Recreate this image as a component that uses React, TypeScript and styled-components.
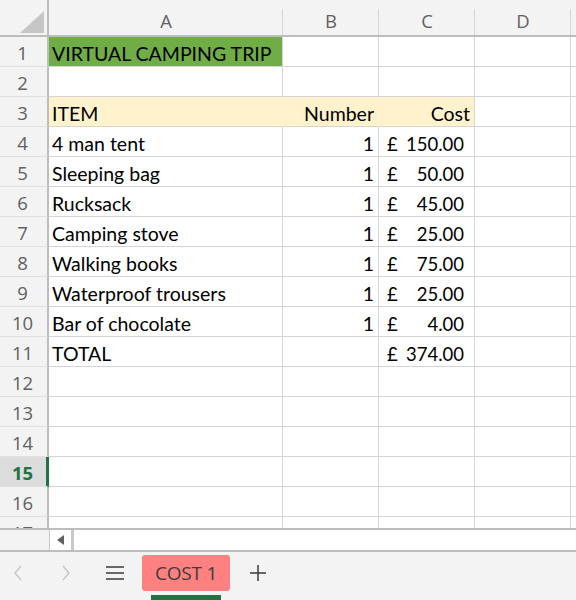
import React from 'react'
import styled, { createGlobalStyle, css } from 'styled-components'

const GlobalStyle = createGlobalStyle`
  html, body {
    margin: 0;
    padding: 0;
    background: #ffffff;
  }
  body {
    font-family: 'Open Sans', 'Noto Sans', sans-serif;
  }
`

const GRID_LINE = '#d4d4d4'
const HEADER_BG = '#f3f3f3'
const FRAME = '#bdbdbd'

type Fill = 'green' | 'yellow' | undefined

const fills: Record<string, string> = {
  green: '#70ad47',
  yellow: '#fff2cc',
}

type Row = {
  a?: string
  b?: string
  c?: string
  money?: boolean
  fill?: Fill
  fillCols?: number
}

const rows: Row[] = [
  { a: 'VIRTUAL CAMPING TRIP', fill: 'green', fillCols: 1 },
  {},
  { a: 'ITEM', b: 'Number', c: 'Cost', fill: 'yellow', fillCols: 3 },
  { a: '4 man tent', b: '1', c: '150.00', money: true },
  { a: 'Sleeping bag', b: '1', c: '50.00', money: true },
  { a: 'Rucksack', b: '1', c: '45.00', money: true },
  { a: 'Camping stove', b: '1', c: '25.00', money: true },
  { a: 'Walking books', b: '1', c: '75.00', money: true },
  { a: 'Waterproof trousers', b: '1', c: '25.00', money: true },
  { a: 'Bar of chocolate', b: '1', c: '4.00', money: true },
  { a: 'TOTAL', c: '374.00', money: true },
  {},
  {},
  {},
  {},
  {},
  {},
]

const columns = ['A', 'B', 'C', 'D', '']
const SELECTED_ROW = 15

const Sheet = styled.div`
  width: 576px;
  height: 600px;
  display: flex;
  flex-direction: column;
  overflow: hidden;
`

const Grid = styled.div`
  display: grid;
  grid-template-columns: 49px 234px 96px 96px 96px 1fr;
  grid-auto-rows: 30px;
  grid-template-rows: 37px;
  height: 528px;
  overflow: hidden;
  border-bottom: 2px solid ${FRAME};
  flex: none;
`

const Corner = styled.div`
  background: ${HEADER_BG};
  border-right: 2px solid ${FRAME};
  border-bottom: 2px solid ${FRAME};
  display: flex;
  align-items: flex-end;
  justify-content: flex-end;
  padding: 0 3px 2px 0;
  box-sizing: border-box;
`

const ColHeader = styled.div`
  background: linear-gradient(${GRID_LINE}, ${GRID_LINE}) right 9px / 1px calc(100% - 9px) no-repeat,
    ${HEADER_BG};
  border-bottom: 2px solid ${FRAME};
  display: flex;
  align-items: center;
  justify-content: center;
  padding-top: 6px;
  font-size: 18.5px;
  color: #616161;
  box-sizing: border-box;
`

const RowHeader = styled.div<{ $selected?: boolean }>`
  background: ${HEADER_BG};
  border-right: 2px solid ${FRAME};
  border-bottom: 1px solid #e1e1e1;
  display: flex;
  align-items: center;
  justify-content: center;
  font-size: 18.5px;
  color: #616161;
  box-sizing: border-box;
  padding: 1px 2px 0 0;
  ${p =>
    p.$selected &&
    css`
      background: #dcdcdc;
      color: #217346;
      font-weight: 700;
      border-right: 3px solid #217346;
      padding-right: 1px;
    `}
`

const Cell = styled.div<{ $fill?: Fill; $joinRight?: boolean; $align?: 'left' | 'right' }>`
  background: ${p => (p.$fill ? fills[p.$fill] : '#ffffff')};
  border-right: 1px solid ${p => (p.$joinRight && p.$fill ? fills[p.$fill] : GRID_LINE)};
  border-bottom: 1px solid ${GRID_LINE};
  display: flex;
  align-items: center;
  justify-content: ${p => (p.$align === 'right' ? 'flex-end' : 'flex-start')};
  padding: 4px 4px 0 3px;
  font-family: 'Lato', 'Open Sans', sans-serif;
  font-size: 19.5px;
  color: #000000;
  white-space: nowrap;
  box-sizing: border-box;
  min-width: 0;
`

const Money = styled(Cell)`
  justify-content: space-between;
  gap: 4px;
  padding: 4px 10px 0 8px;
  font-size: 18.5px;
`

const ScrollRow = styled.div`
  height: 20px;
  display: flex;
  border-bottom: 2px solid ${FRAME};
  flex: none;
  background: #ffffff;
`

const ScrollGutter = styled.div`
  width: 49px;
  background: ${HEADER_BG};
`

const ScrollButton = styled.div`
  width: 21px;
  border-left: 1px solid #c8c8c8;
  border-right: 3px solid #c8c8c8;
  display: flex;
  align-items: center;
  justify-content: center;
  background: #ffffff;
`

const ScrollTrack = styled.div`
  flex: 1;
  background: #ffffff;
`

const TabBar = styled.div`
  flex: 1;
  background: ${HEADER_BG};
  display: flex;
  align-items: flex-start;
  padding-top: 3px;
`

const NavButton = styled.div<{ $w: number }>`
  width: ${p => p.$w}px;
  height: 36px;
  display: flex;
  align-items: center;
  justify-content: center;
  flex: none;
`

const Tab = styled.div`
  position: relative;
  margin-left: 8px;
  width: 88px;
  height: 36px;
  border-radius: 3px;
  background: #ff8080;
  display: flex;
  align-items: center;
  justify-content: center;
  font-size: 19px;
  color: #3b3b3b;
  letter-spacing: -0.2px;
`

const TabUnderline = styled.div`
  position: absolute;
  left: 9px;
  right: 9px;
  bottom: -10px;
  height: 6px;
  background: #217346;
`

const Chevron = ({ dir }: { dir: 'left' | 'right' }) => (
  <svg width="12" height="18" viewBox="0 0 12 18">
    <path
      d={dir === 'left' ? 'M9 2 L3 9 L9 16' : 'M3 2 L9 9 L3 16'}
      fill="none"
      stroke="#c2c2c2"
      strokeWidth="1.3"
    />
  </svg>
)

const Hamburger = () => (
  <svg width="20" height="16" viewBox="0 0 20 16">
    <path d="M1 2 H19 M1 8 H19 M1 14 H19" stroke="#3b3b3b" strokeWidth="1.5" />
  </svg>
)

const Plus = () => (
  <svg width="20" height="20" viewBox="0 0 20 20">
    <path d="M10 2 V18 M2 10 H18" stroke="#3b3b3b" strokeWidth="1.5" />
  </svg>
)

const CornerTriangle = () => (
  <svg width="24" height="22" viewBox="0 0 24 22">
    <path d="M24 0 L24 22 L0 22 Z" fill="#c6c6c6" />
  </svg>
)

const ScrollArrow = () => (
  <svg width="8" height="10" viewBox="0 0 8 10">
    <path d="M7 0 L7 10 L0 5 Z" fill="#606060" />
  </svg>
)

const App = () => {
  return (
    <>
      <GlobalStyle />
      <Sheet>
        <Grid>
          <Corner>
            <CornerTriangle />
          </Corner>
          {columns.map((c, i) => (
            <ColHeader key={i}>{c}</ColHeader>
          ))}
          {rows.map((row, i) => {
            const n = i + 1
            const span = row.fillCols ?? 0
            const fillA = row.fill && span >= 1 ? row.fill : undefined
            const fillB = row.fill && span >= 2 ? row.fill : undefined
            const fillC = row.fill && span >= 3 ? row.fill : undefined
            return (
              <React.Fragment key={n}>
                <RowHeader $selected={n === SELECTED_ROW}>{n}</RowHeader>
                <Cell $fill={fillA} $joinRight={span > 1}>
                  {row.a}
                </Cell>
                <Cell $fill={fillB} $joinRight={span > 2} $align="right">
                  {row.b}
                </Cell>
                {row.money ? (
                  <Money>
                    <span>£</span>
                    <span>{row.c}</span>
                  </Money>
                ) : (
                  <Cell $fill={fillC} $align="right">
                    {row.c}
                  </Cell>
                )}
                <Cell />
                <Cell />
              </React.Fragment>
            )
          })}
        </Grid>
        <ScrollRow>
          <ScrollGutter />
          <ScrollButton>
            <ScrollArrow />
          </ScrollButton>
          <ScrollTrack />
        </ScrollRow>
        <TabBar>
          <NavButton $w={36}>
            <Chevron dir="left" />
          </NavButton>
          <NavButton $w={60}>
            <Chevron dir="right" />
          </NavButton>
          <NavButton $w={38}>
            <Hamburger />
          </NavButton>
          <Tab>
            COST 1
            <TabUnderline />
          </Tab>
          <NavButton $w={56}>
            <Plus />
          </NavButton>
        </TabBar>
      </Sheet>
    </>
  )
}

export default App
